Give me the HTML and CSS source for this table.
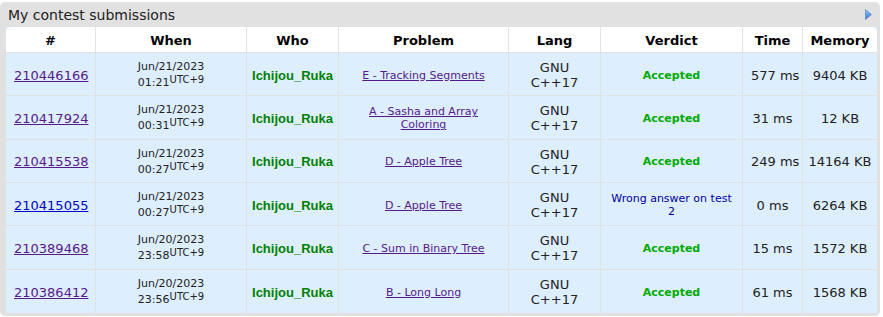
FILE: index.html
```html
<!DOCTYPE html>
<html>
<head>
<meta charset="utf-8">
<link rel="stylesheet" href="styles.css">
</head>
<body>
<div class="roundbox">
  <div class="caption-row">
    <span class="caption">My contest submissions</span>
    <svg class="toggle" width="7" height="11" viewBox="0 0 7 11">
      <defs>
        <linearGradient id="tg" x1="0" y1="0" x2="0" y2="1">
          <stop offset="0" stop-color="#9cc3ee"/>
          <stop offset="1" stop-color="#2f78d0"/>
        </linearGradient>
      </defs>
      <polygon points="0.5,0.5 6.5,5.5 0.5,10.5" fill="url(#tg)" stroke="#3f7fc9" stroke-width="0.6"/>
    </svg>
  </div>
  <table class="rtable">
    <colgroup>
      <col class="c-id"><col class="c-when"><col class="c-who"><col class="c-prob"><col class="c-lang"><col class="c-verdict"><col class="c-time"><col class="c-mem">
    </colgroup>
    <thead>
      <tr>
        <th class="first">#</th><th>When</th><th>Who</th><th>Problem</th><th>Lang</th><th>Verdict</th><th>Time</th><th class="last">Memory</th>
      </tr>
    </thead>
    <tbody>
      <tr>
        <td><a class="visited" href="#">210446166</a></td>
        <td class="when">Jun/21/2023<br>01:21<sup>UTC+9</sup></td>
        <td class="who"><span class="user">Ichijou_Ruka</span></td>
        <td class="prob"><a class="visited" href="#">E - Tracking Segments</a></td>
        <td>GNU C++17</td>
        <td class="verdict"><span class="ok">Accepted</span></td>
        <td>577&nbsp;ms</td>
        <td class="last">9404&nbsp;KB</td>
      </tr>
      <tr>
        <td><a class="visited" href="#">210417924</a></td>
        <td class="when">Jun/21/2023<br>00:31<sup>UTC+9</sup></td>
        <td class="who"><span class="user">Ichijou_Ruka</span></td>
        <td class="prob"><a class="visited" href="#">A - Sasha and Array Coloring</a></td>
        <td>GNU C++17</td>
        <td class="verdict"><span class="ok">Accepted</span></td>
        <td>31&nbsp;ms</td>
        <td class="last">12&nbsp;KB</td>
      </tr>
      <tr>
        <td><a class="visited" href="#">210415538</a></td>
        <td class="when">Jun/21/2023<br>00:27<sup>UTC+9</sup></td>
        <td class="who"><span class="user">Ichijou_Ruka</span></td>
        <td class="prob"><a class="visited" href="#">D - Apple Tree</a></td>
        <td>GNU C++17</td>
        <td class="verdict"><span class="ok">Accepted</span></td>
        <td>249&nbsp;ms</td>
        <td class="last">14164&nbsp;KB</td>
      </tr>
      <tr>
        <td><a class="fresh" href="#">210415055</a></td>
        <td class="when">Jun/21/2023<br>00:27<sup>UTC+9</sup></td>
        <td class="who"><span class="user">Ichijou_Ruka</span></td>
        <td class="prob"><a class="visited" href="#">D - Apple Tree</a></td>
        <td>GNU C++17</td>
        <td class="verdict"><span class="wa">Wrong answer on test 2</span></td>
        <td>0&nbsp;ms</td>
        <td class="last">6264&nbsp;KB</td>
      </tr>
      <tr>
        <td><a class="visited" href="#">210389468</a></td>
        <td class="when">Jun/20/2023<br>23:58<sup>UTC+9</sup></td>
        <td class="who"><span class="user">Ichijou_Ruka</span></td>
        <td class="prob"><a class="visited" href="#">C - Sum in Binary Tree</a></td>
        <td>GNU C++17</td>
        <td class="verdict"><span class="ok">Accepted</span></td>
        <td>15&nbsp;ms</td>
        <td class="last">1572&nbsp;KB</td>
      </tr>
      <tr class="lastrow">
        <td><a class="visited" href="#">210386412</a></td>
        <td class="when">Jun/20/2023<br>23:56<sup>UTC+9</sup></td>
        <td class="who"><span class="user">Ichijou_Ruka</span></td>
        <td class="prob"><a class="visited" href="#">B - Long Long</a></td>
        <td>GNU C++17</td>
        <td class="verdict"><span class="ok">Accepted</span></td>
        <td>61&nbsp;ms</td>
        <td class="last">1568&nbsp;KB</td>
      </tr>
    </tbody>
  </table>
</div>
</body>
</html>
```

FILE: styles.css
```css
html, body {
  margin: 0;
  padding: 0;
  background: #ffffff;
}

body {
  font-family: "DejaVu Sans", Verdana, sans-serif;
  color: #222222;
}

.roundbox {
  margin: 2px 3px 1px 0;
  width: 880px;
  box-sizing: border-box;
  background: #e1e1e1;
  border-radius: 5px;
  padding: 0 3px 3px 6px;
}

.caption-row {
  height: 25px;
  display: flex;
  align-items: flex-start;
  justify-content: space-between;
}

.caption {
  font-size: 14px;
  line-height: 24px;
  padding-top: 1px;
  padding-left: 2px;
  color: #222222;
}

.toggle {
  display: block;
  margin-top: 7px;
  margin-right: 5px;
}

.rtable {
  border-collapse: separate;
  border-spacing: 0;
  table-layout: fixed;
  width: 871px;
  background: #ddeeff;
}

.c-id { width: 90px; }
.c-when { width: 151px; }
.c-who { width: 92px; }
.c-prob { width: 170px; }
.c-lang { width: 92px; }
.c-verdict { width: 142px; }
.c-time { width: 60px; }
.c-mem { width: 74px; }

.rtable th,
.rtable td {
  box-sizing: border-box;
  border-right: 1px solid #e1e1e1;
  border-bottom: 1px solid #e1e1e1;
  text-align: center;
  vertical-align: middle;
  padding: 2px 8px 0;
}

.rtable th {
  padding-top: 1px;
}

.rtable th.last,
.rtable td.last {
  border-right: none;
  padding-left: 2px;
  padding-right: 2px;
}

.rtable td.who {
  padding-left: 2px;
  padding-right: 2px;
  white-space: nowrap;
}

.rtable thead tr {
  height: 26px;
}

.rtable th {
  background: #ffffff;
  font-size: 13px;
  font-weight: bold;
  color: #000000;
}

.rtable th.first {
  border-top-left-radius: 5px;
}

.rtable th.last {
  border-top-right-radius: 5px;
}

.rtable tbody tr {
  height: 43.33px;
}

.rtable tbody tr.lastrow td {
  border-bottom: none;
}

.rtable td {
  font-size: 13px;
  line-height: normal;
}

.rtable td.when {
  font-size: 11px;
  line-height: 16px;
}

.rtable td.when sup {
  font-size: 10px;
  line-height: 0;
  vertical-align: 3px;
}

.rtable td.prob {
  font-size: 11px;
}

.rtable td.verdict {
  font-size: 11px;
}

a.visited {
  color: #551a8b;
}

a.fresh {
  color: #0000cc;
}

.user {
  font-family: "Liberation Sans", Arial, sans-serif;
  font-weight: bold;
  color: #008000;
}

.ok {
  font-weight: bold;
  color: #00aa00;
}

.wa {
  color: #0000a0;
}
```
